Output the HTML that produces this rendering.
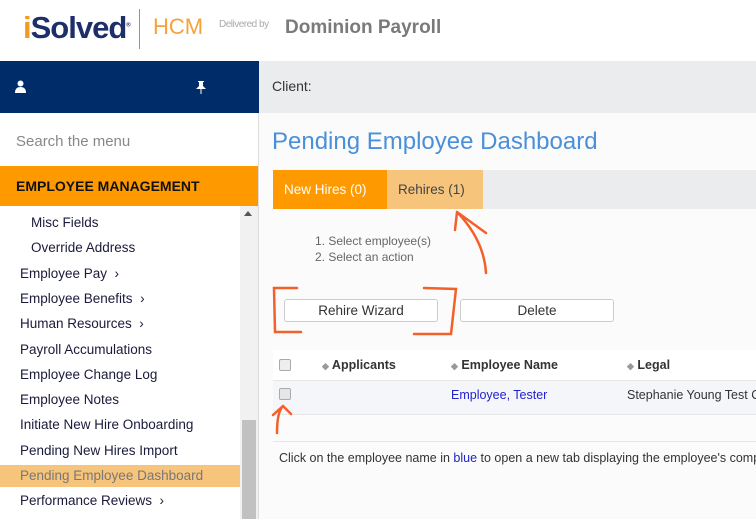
<!DOCTYPE html>
<html><head><style>
*{margin:0;padding:0;box-sizing:border-box}
body{width:756px;height:519px;overflow:hidden;background:#fff;font-family:"Liberation Sans",sans-serif;position:relative;color:#333}
.a{position:absolute;white-space:nowrap}
.mi{position:absolute;left:20px;font-size:13.5px;color:#1a1a3a}
</style></head><body>
<!-- header -->
<div class="a" style="left:23px;top:10px;font-size:31px;font-weight:bold;letter-spacing:-1px;color:#1d2f6b"><span style="color:#f39a21">i</span>Solved<sup style="font-size:6px">®</sup></div>
<div class="a" style="left:139px;top:9px;width:1px;height:40px;background:#8a93ab"></div>
<div class="a" style="left:153px;top:14px;font-size:22px;color:#f7a13b">HCM</div>
<div class="a" style="left:219px;top:19px;font-size:10px;color:#aaa;letter-spacing:-0.5px">Delivered by</div>
<div class="a" style="left:285px;top:17px;font-size:19px;font-weight:bold;color:#7a7a7a">Dominion Payroll</div>
<!-- blue bar -->
<div class="a" style="left:0;top:61px;width:259px;height:52px;background:#002d6a"></div>
<svg class="a" style="left:14px;top:80px" width="13" height="13" viewBox="0 0 13 13"><circle cx="6.5" cy="3.5" r="3" fill="#fff"/><path d="M1 13 Q1 7 6.5 7 Q12 7 12 13Z" fill="#fff"/></svg>
<svg class="a" style="left:195px;top:80px" width="12" height="14" viewBox="0 0 12 14"><path d="M3 1h6v1H8v4l3 3H1l3-3V2H3z M5.5 9h1v5h-1z" fill="#fff"/></svg>
<div class="a" style="left:259px;top:61px;width:497px;height:52px;background:#ebecee"></div>
<div class="a" style="left:272px;top:78px;font-size:14px;color:#333">Client:</div>
<!-- sidebar -->
<div class="a" style="left:258px;top:113px;width:1px;height:406px;background:#ddd"></div>
<div class="a" style="left:16px;top:133px;font-size:15px;color:#888">Search the menu</div>
<div class="a" style="left:0;top:166px;width:258px;height:40px;background:#fe9a00"></div>
<div class="a" style="left:16px;top:178px;font-size:14px;font-weight:bold;color:#111">EMPLOYEE MANAGEMENT</div>
<div class="a" style="left:240px;top:206px;width:18px;height:313px;background:#f1f1f1"></div>
<div class="a" style="left:242px;top:420px;width:14px;height:99px;background:#c1c1c1"></div>
<div class="a" style="left:244px;top:211px;width:0;height:0;border-left:4px solid transparent;border-right:4px solid transparent;border-bottom:5px solid #555"></div>
<div class="a" style="left:0;top:465px;width:240px;height:22px;background:#f7c47c"></div>
<div class="mi" style="left:31px;top:215px">Misc Fields</div>
<div class="mi" style="left:31px;top:240px">Override Address</div>
<div class="mi" style="top:266px">Employee Pay &nbsp;›</div>
<div class="mi" style="top:291px">Employee Benefits &nbsp;›</div>
<div class="mi" style="top:316px">Human Resources &nbsp;›</div>
<div class="mi" style="top:342px">Payroll Accumulations</div>
<div class="mi" style="top:367px">Employee Change Log</div>
<div class="mi" style="top:392px">Employee Notes</div>
<div class="mi" style="top:417px">Initiate New Hire Onboarding</div>
<div class="mi" style="top:443px">Pending New Hires Import</div>
<div class="mi" style="top:468px;color:#777">Pending Employee Dashboard</div>
<div class="mi" style="top:493px">Performance Reviews &nbsp;›</div>
<!-- main -->
<div class="a" style="left:259px;top:113px;width:497px;height:406px;background:#fbfbfb"></div>
<div class="a" style="left:272px;top:128px;font-size:24px;color:#4a90d9">Pending Employee Dashboard</div>
<div class="a" style="left:273px;top:170px;width:483px;height:39px;background:#ebecee"></div>
<div class="a" style="left:273px;top:170px;width:114px;height:39px;background:#fe9a00"></div>
<div class="a" style="left:284px;top:182px;font-size:13.5px;color:#fff">New Hires (0)</div>
<div class="a" style="left:387px;top:170px;width:96px;height:39px;background:#f7c47c"></div>
<div class="a" style="left:398px;top:182px;font-size:13.5px;color:#444">Rehires (1)</div>
<div class="a" style="left:315px;top:233px;font-size:12px;color:#666;line-height:16px">1. Select employee(s)<br>2. Select an action</div>
<div class="a" style="left:284px;top:299px;width:154px;height:23px;border:1px solid #ccc;border-radius:3px;background:#fff;font-size:13.5px;text-align:center;line-height:21px">Rehire Wizard</div>
<div class="a" style="left:460px;top:299px;width:154px;height:23px;border:1px solid #ccc;border-radius:3px;background:#fff;font-size:13.5px;text-align:center;line-height:21px">Delete</div>
<div class="a" style="left:273px;top:350px;width:483px;height:31px;background:#fff;border-bottom:1px solid #e6e6e6"></div>
<div class="a" style="left:273px;top:381px;width:483px;height:34px;background:#f5f6fa;border-bottom:1px solid #e6e6e6"></div>
<div class="a" style="left:279px;top:359px;width:12px;height:12px;border:1px solid #aaa;border-radius:2px;background:#eee"></div>
<div class="a" style="left:279px;top:388px;width:12px;height:12px;border:1px solid #aaa;border-radius:2px;background:#e6e6e6"></div>
<div class="a" style="left:322px;top:358px;font-size:12.5px;font-weight:bold;color:#333"><span style="color:#999;font-size:9px">◆</span> Applicants</div>
<div class="a" style="left:451px;top:358px;font-size:12.5px;font-weight:bold;color:#333"><span style="color:#999;font-size:9px">◆</span> Employee Name</div>
<div class="a" style="left:627px;top:358px;font-size:12.5px;font-weight:bold;color:#333"><span style="color:#999;font-size:9px">◆</span> Legal</div>
<div class="a" style="left:451px;top:388px;font-size:12.5px;color:#2222cc">Employee, Tester</div>
<div class="a" style="left:627px;top:388px;font-size:12.5px;color:#333">Stephanie Young Test C</div>
<div class="a" style="left:273px;top:441px;width:483px;height:1px;background:#e6e6e6"></div>
<div class="a" style="left:279px;top:451px;font-size:12.5px;color:#333">Click on the employee name in <span style="color:#2222cc">blue</span> to open a new tab displaying the employee's comp</div>
<!-- annotations -->
<svg class="a" style="left:0;top:0" width="756" height="519" viewBox="0 0 756 519" fill="none" stroke="#f4602a" stroke-width="2.5" stroke-linecap="round">
<path d="M486 273 Q484 240 457 212 M457 212 L455 230 M457 212 L486 233"/>
<path d="M297 288 L274 288 L275 332 L301 332"/>
<path d="M424 288 L456 289 L451 334 L414 334"/>
<path d="M277 433 Q277 412 283 406 M283 406 L273 415 M283 406 L291 414"/>
</svg>
</body></html>
